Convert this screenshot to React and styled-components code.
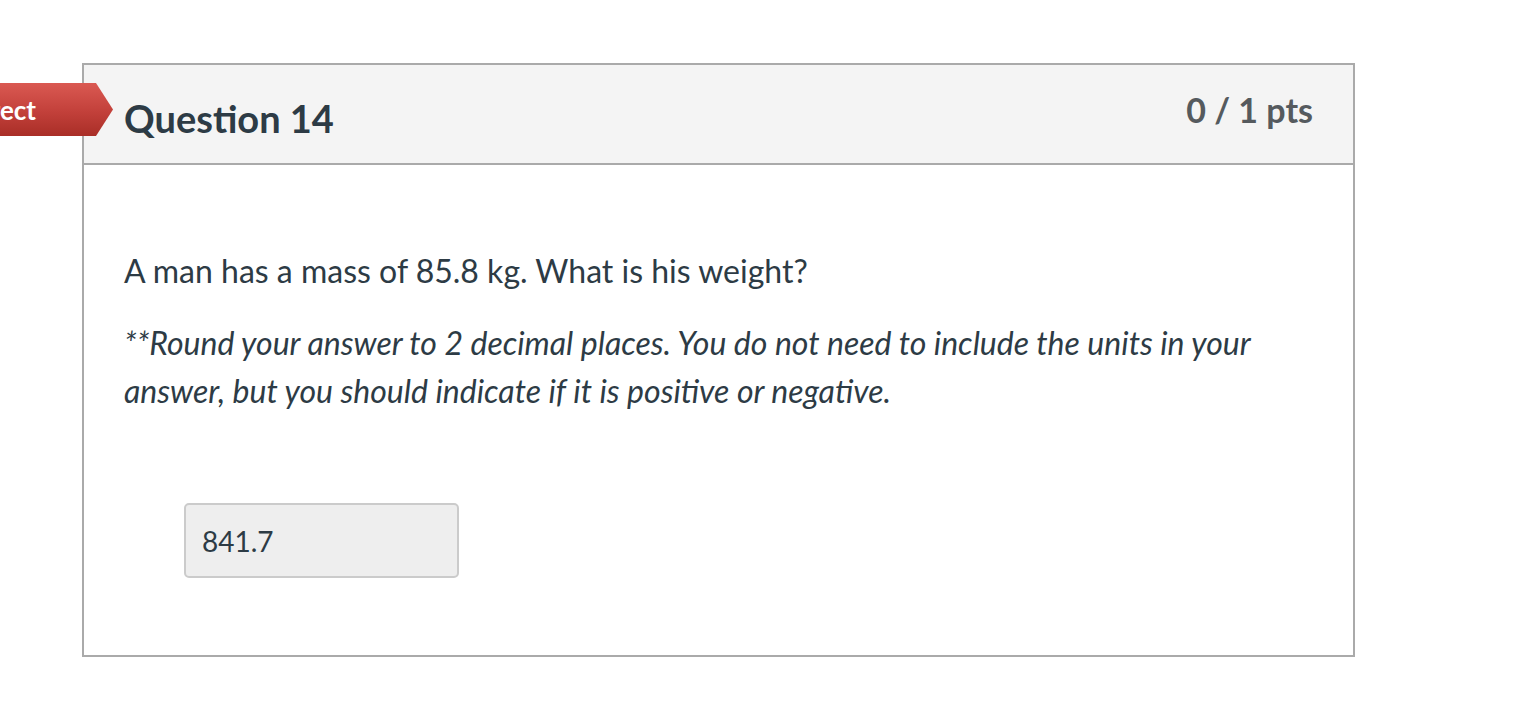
import React from "react";
import styled, { createGlobalStyle } from "styled-components";

const Global = createGlobalStyle`
  html, body { margin: 0; padding: 0; background: #fff; }
  body { font-family: Lato, "Open Sans", sans-serif; color: #2d3b45; }
`;

const Page = styled.div`
  width: 1536px;
  height: 702px;
  padding: 63px 0 0 82px;
  box-sizing: border-box;
  position: relative;
  overflow: hidden;
`;

const Card = styled.div`
  width: 1273px;
  border: 2px solid #aaaaaa;
  box-sizing: border-box;
  position: relative;
`;

const Header = styled.div`
  height: 98px;
  background: #f4f4f4;
  border-bottom: 2px solid #aaaaaa;
  display: flex;
  justify-content: space-between;
  align-items: flex-start;
  padding: 0 40px;
`;

const Title = styled.h2`
  margin: 0;
  margin-top: 31px;
  font-size: 38px;
  font-weight: 700;
  line-height: 44px;
  color: #2d3b45;
`;

const Points = styled.div`
  margin-top: 24px;
  font-size: 34px;
  font-weight: 700;
  line-height: 42px;
  color: #555a5e;
`;

const Badge = styled.div`
  position: absolute;
  top: 18px;
  left: -141px;
  width: 170px;
  height: 53px;
  background: linear-gradient(#da5952 0%, #c2403a 55%, #a92e27 100%);
  color: #fff;
  font-weight: 700;
  font-size: 26px;
  display: flex;
  align-items: center;
  justify-content: flex-end;
  padding-right: 77px;
  box-sizing: border-box;
  clip-path: polygon(0 0, 153px 0, 170px 50%, 153px 100%, 0 100%);
`;

const Body = styled.div`
  padding: 82px 40px 77px;
`;

const Text = styled.p`
  margin: 0 0 24px;
  font-size: 32px;
  line-height: 48px;
  color: #2d3b45;
`;

const Note = styled(Text)`
  font-style: italic;
  margin-bottom: 0;
`;

const AnswerBox = styled.div`
  margin: 88px 0 0 60px;
  width: 275px;
  height: 75px;
  box-sizing: border-box;
  background: #eeeeee;
  border: 2px solid #cbcbcb;
  border-radius: 5px;
  padding-left: 16px;
  display: flex;
  align-items: center;
  font-size: 28px;
  color: #2d3b45;
`;

export default function App() {
  return (
    <>
      <Global />
      <Page>
        <Card>
          <Badge>Incorrect</Badge>
          <Header>
            <Title>Question 14</Title>
            <Points>0 / 1 pts</Points>
          </Header>
          <Body>
            <Text>A man has a mass of 85.8 kg. What is his weight?</Text>
            <Note>
              **Round your answer to 2 decimal places. You do not need to include the units in your answer, but you should indicate if it is positive or negative.
            </Note>
            <AnswerBox>841.7</AnswerBox>
          </Body>
        </Card>
      </Page>
    </>
  );
}
